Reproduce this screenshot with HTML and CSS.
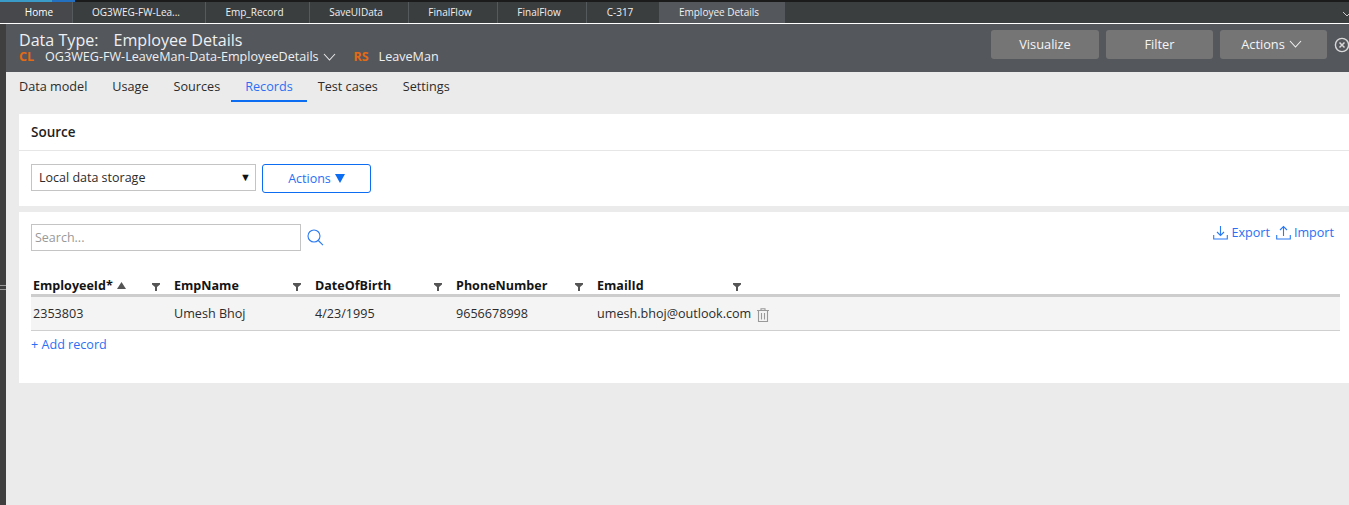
FILE: index.html
```html
<!DOCTYPE html>
<html lang="en">
<head>
<meta charset="utf-8">
<title>Employee Details</title>
<link rel="stylesheet" href="styles.css">
</head>
<body>
<div class="rail"><span class="handle"></span></div>
<div class="main">
  <div class="tabs">
    <div class="tab home">Home</div>
    <div class="tab w133">OG3WEG-FW-Lea...</div>
    <div class="tab w104">Emp_Record</div>
    <div class="tab w99">SaveUIData</div>
    <div class="tab w89">FinalFlow</div>
    <div class="tab w89">FinalFlow</div>
    <div class="tab w72">C-317</div>
    <div class="tab active">Employee Details</div>
    <svg class="tabs-more" width="10" height="6" viewBox="0 0 10 6"><path d="M1 1l4 4 4-4" fill="none" stroke="#ccc" stroke-width="1"/></svg>
  </div>
  <header class="head">
    <div class="head-text">
      <div class="title"><span>Data Type:</span><span>Employee Details</span></div>
      <div class="sub">
        <b class="tag">CL</b><span class="sub-val">OG3WEG-FW-LeaveMan-Data-EmployeeDetails</span>
        <svg class="chev" width="13" height="8" viewBox="0 0 13 8"><path d="M1 1l5.500 6L12 1" fill="none" stroke="#e8e8e8" stroke-width="1.100"/></svg>
        <b class="tag tag-rs">RS</b><span class="sub-val">LeaveMan</span>
      </div>
    </div>
    <div class="head-actions">
      <button class="hbtn b108">Visualize</button>
      <button class="hbtn b107">Filter</button>
      <button class="hbtn b107 hbtn-menu">Actions<svg width="13" height="8" viewBox="0 0 13 8"><path d="M1 1l5.500 6L12 1" fill="none" stroke="#f2f2f2" stroke-width="1.100"/></svg></button>
      <svg class="close" width="16" height="16" viewBox="0 0 16 16"><circle cx="8" cy="8" r="6.600" fill="none" stroke="#d8d8d8" stroke-width="1.400"/><path d="M5.500 5.500l5 5M10.500 5.500l-5 5" stroke="#d8d8d8" stroke-width="1.500"/></svg>
    </div>
  </header>
  <nav class="nav">
    <a>Data model</a><a>Usage</a><a>Sources</a><a class="on">Records</a><a>Test cases</a><a>Settings</a>
  </nav>
  <section class="card source">
    <h2 class="source-head">Source</h2>
    <div class="source-body">
      <div class="select">Local data storage<span class="select-arrow">▼</span></div>
      <button class="btn-actions">Actions <svg width="10" height="9" viewBox="0 0 10 9"><path d="M0 0h10L5 9z" fill="#0c6cf2"/></svg></button>
    </div>
  </section>
  <section class="card records">
    <div class="toolbar">
      <div class="search">Search...</div>
      <svg class="search-icon" width="17" height="17" viewBox="0 0 17 17"><circle cx="7" cy="7" r="6" fill="none" stroke="#2a7af5" stroke-width="1.100"/><path d="M11.300 11.500l4.700 4.700" stroke="#2a7af5" stroke-width="1.100"/></svg>
      <div class="links">
        <a><svg width="15" height="15" viewBox="0 0 15 15"><path d="M7.500 1v9M4 7l3.500 3.500L11 7M.7 10v4h13.600v-4" fill="none" stroke="#2a7af5" stroke-width="1.100"/></svg>Export</a>
        <a><svg width="15" height="15" viewBox="0 0 15 15"><path d="M7.500 11V2M4 5l3.500-3.500L11 5M.7 10v4h13.600v-4" fill="none" stroke="#2a7af5" stroke-width="1.100"/></svg>Import</a>
      </div>
    </div>
    <div class="thead">
      <div class="th"><span>EmployeeId*</span><svg class="sort" width="9" height="7" viewBox="0 0 9 7"><path d="M4.500 0L9 7H0z" fill="#555"/></svg><svg class="filter" width="8" height="8" viewBox="0 0 8 8"><path d="M0 0h8v1.500L5 4v4H3V4L0 1.500z" fill="#555"/></svg></div>
      <div class="th"><span>EmpName</span><svg class="filter" width="8" height="8" viewBox="0 0 8 8"><path d="M0 0h8v1.500L5 4v4H3V4L0 1.500z" fill="#555"/></svg></div>
      <div class="th"><span>DateOfBirth</span><svg class="filter" width="8" height="8" viewBox="0 0 8 8"><path d="M0 0h8v1.500L5 4v4H3V4L0 1.500z" fill="#555"/></svg></div>
      <div class="th"><span>PhoneNumber</span><svg class="filter" width="8" height="8" viewBox="0 0 8 8"><path d="M0 0h8v1.500L5 4v4H3V4L0 1.500z" fill="#555"/></svg></div>
      <div class="th th-email"><span>EmailId</span><svg class="filter" width="8" height="8" viewBox="0 0 8 8"><path d="M0 0h8v1.500L5 4v4H3V4L0 1.500z" fill="#555"/></svg></div>
    </div>
    <div class="trow">
      <div class="td">2353803</div>
      <div class="td">Umesh Bhoj</div>
      <div class="td">4/23/1995</div>
      <div class="td">9656678998</div>
      <div class="td td-email">umesh.bhoj@outlook.com<svg class="trash" width="12" height="14" viewBox="0 0 12 14"><path d="M0 2.500h12M4 2.500V.700h4v1.800M1.500 2.500v11h9v-11M4.500 5v6.500M7.500 5v6.500" fill="none" stroke="#999" stroke-width="1.100"/></svg></div>
    </div>
    <a class="add">+ Add record</a>
  </section>
</div>
</body>
</html>
```
FILE: styles.css
```css
* { box-sizing: border-box; }
html, body { margin: 0; height: 505px; overflow: hidden; }
body {
  display: flex;
  font-family: "Open Sans", sans-serif;
  font-size: 12.600px;
  color: #2b2b2b;
  background: #ebebeb;
}
.rail {
  width: 6px;
  background: #3f3f3f;
  display: flex;
  flex: none;
  align-items: flex-start;
  padding-top: 285px;
}
.handle {
  width: 6px;
  height: 5px;
  border-top: 1px solid #9a9a9a;
  border-bottom: 1px solid #9a9a9a;
}
.main { flex: 1; min-width: 0; }

.tabs {
  display: flex;
  height: 24px;
  margin-left: -6px;
  background: #3b3e3f;
  border-top: 2px solid #1b1b1b;
  border-bottom: 1px solid #fff;
  color: #f0f0f0;
  font-size: 10px;
  position: relative;
}
.tabs::before {
  content: "";
  position: absolute;
  left: 0;
  top: -2px;
  width: 75px;
  height: 2px;
  background: linear-gradient(90deg, #3a9bc9 70%, #2470c0 70%);
}
.tab {
  display: flex;
  align-items: center;
  justify-content: center;
  padding: 0 6px 2px 0;
  border-right: 1px solid #555a5c;
}
.home { width: 73px; background: #46484c; padding: 0 0 2px 6px; color: #fff; }
.w133 { width: 133px; }
.w104 { width: 104px; }
.w99 { width: 99px; }
.w89 { width: 89px; }
.w72 { width: 72px; border-right: 0; }
.active { width: 126px; background: #54575c; border-right: 0; }
.tabs-more { position: absolute; right: -3px; top: 9px; }

.head {
  height: 48px;
  background: #54575c;
  display: flex;
  justify-content: space-between;
  padding: 8px 0 0 13px;
  color: #eef0f2;
}
.title { font-size: 16.100px; line-height: 17px; display: flex; gap: 15px; }
.sub { display: flex; align-items: center; font-size: 12.600px; line-height: 17px; margin-top: -1px; }
.tag { color: #e56a14; font-size: 12.500px; font-weight: 700; width: 26px; }
.tag-rs { margin-left: 18px; width: 25px; }
.chev { margin-left: 4px; }
.head-actions { display: flex; gap: 7px; align-items: flex-start; margin: -2px -1px 0 0; }
.hbtn {
  height: 29px;
  background: #757575;
  border: 0;
  border-radius: 3px;
  color: #f6f6f6;
  font: 12.800px "Open Sans", sans-serif;
  padding: 0 0 2px;
  display: flex;
  align-items: center;
  justify-content: center;
  gap: 4px;
}
.hbtn-menu { padding-right: 4px; }
.b108 { width: 108px; }
.b107 { width: 107px; }
.close { margin-top: 7px; }

.nav {
  height: 30px;
  display: flex;
  padding-left: 13px;
  gap: 25px;
  font-size: 12.650px;
  color: #2b2b2b;
}
.nav a { line-height: 29px; height: 30px; }
.nav .on {
  color: #2a6ff5;
  border-bottom: 2px solid #0c6cf2;
  padding: 0 14px;
  margin: 0 -14px;
}

.card { margin-left: 13px; background: #fff; }
.source { margin-top: 12px; height: 92px; }
.source-head {
  margin: 0;
  height: 37px;
  padding: 0 12px;
  font-size: 13.500px;
  font-weight: 600;
  line-height: 36px;
  color: #1f1f1f;
  border-bottom: 1px solid #e6e6e6;
}
.source-body { display: flex; gap: 6px; padding: 13px 12px 0; }
.select {
  width: 225px;
  height: 27px;
  border: 1px solid #c4c4c4;
  padding: 0 4px 0 7px;
  display: flex;
  justify-content: space-between;
  align-items: center;
  font-size: 12.500px;
}
.select-arrow { font-size: 11px; color: #111; padding-bottom: 3px; }
.btn-actions {
  width: 109px;
  height: 29px;
  background: #fff;
  border: 1px solid #0c6cf2;
  border-radius: 3px;
  color: #2a6ff5;
  font: 12.500px "Open Sans", sans-serif;
  padding: 0;
  display: flex;
  align-items: center;
  justify-content: center;
  gap: 4px;
}
.records { margin-top: 6px; height: 171px; padding: 12px 9px 0 12px; }
.toolbar { display: flex; align-items: center; height: 27px; }
.search {
  width: 270px;
  height: 27px;
  border: 1px solid #c4c4c4;
  padding-left: 3px;
  line-height: 25px;
  font-size: 12.500px;
  color: #999;
}
.search-icon { margin: 0 0 0 6px; }
.links {
  margin-left: auto;
  margin-top: -10px;
  margin-right: 6px;
  display: flex;
  gap: 6px;
  color: #2a6ff5;
}
.links a { display: flex; align-items: center; gap: 3px; }
.thead { display: flex; height: 27px; margin-top: 19px; padding-left: 2px; padding-top: 7px; border-bottom: 3px solid #cdcdcd; }
.th, .td { width: 141px; flex: none; }
.th { display: flex; align-items: flex-start; padding-right: 16px; font-weight: 700; font-size: 12.550px; color: #141414; line-height: 18px; position: relative; }
.th .filter { position: absolute; left: 119px; top: 6px; }
.th-email .filter { left: 136px; }
.sort { margin: 5px 0 0 4px; }
.trow { display: flex; height: 34px; padding-left: 2px; background: #f4f4f4; border-bottom: 1px solid #cfcfcf; line-height: 33px; font-size: 12.600px; }
.td-email { width: auto; display: flex; align-items: center; }
.trash { margin: 2px 0 0 6px; }
.add { display: block; color: #2a6ff5; line-height: 18px; margin-top: 5px; }
```
